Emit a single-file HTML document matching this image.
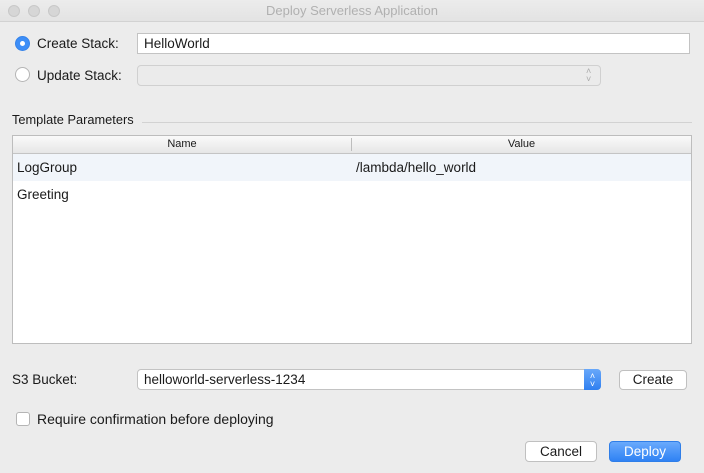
<!DOCTYPE html>
<html><head><style>
*{box-sizing:border-box;margin:0;padding:0}
body{width:704px;height:473px;background:#ececec;font-family:"Liberation Sans",sans-serif;font-size:13.5px;color:#1a1a1a;position:relative;overflow:hidden}
.a{position:absolute}
.tb{left:0;top:0;width:704px;height:22px;background:linear-gradient(#ececec,#e3e3e3);border-bottom:1px solid #d2d2d2;text-align:center;line-height:22px;color:#b0b0b0;font-size:13px}
.dot{width:12px;height:12px;border-radius:50%;background:#d6d6d6;border:1px solid #c8c8c8;top:5px}
.lbl{line-height:16px}
.field{background:#fff;border:1px solid #c3c3c3}
.btn{background:#fff;border:1px solid #c0c0c0;border-radius:4px;text-align:center;line-height:18px}
</style></head><body>
<div class="a tb">Deploy Serverless Application</div>
<div class="a dot" style="left:8px"></div>
<div class="a dot" style="left:28px"></div>
<div class="a dot" style="left:48px"></div>

<div class="a" style="left:15px;top:36px;width:15px;height:15px;border-radius:50%;background:#3d8ef7;border:1px solid #3583ea"><div class="a" style="left:4px;top:4px;width:5px;height:5px;border-radius:50%;background:#fff"></div></div>
<div class="a lbl" style="left:37px;top:36px">Create Stack:</div>
<div class="a field" style="left:137px;top:33px;width:553px;height:21px;padding-left:6px;line-height:19px">HelloWorld</div>

<div class="a" style="left:15px;top:67px;width:15px;height:15px;border-radius:50%;background:#fff;border:1px solid #b5b5b5"></div>
<div class="a lbl" style="left:37px;top:68px">Update Stack:</div>
<div class="a" style="left:137px;top:65px;width:464px;height:21px;background:#ebebeb;border:1px solid #d0d0d0;border-radius:4px"></div>
<div class="a" style="left:586px;top:67px;color:#aaa;font-size:9px;line-height:8px">&#708;<br>&#709;</div>

<div class="a" style="left:12px;top:112px;font-size:12.8px">Template Parameters</div>
<div class="a" style="left:142px;top:122px;width:550px;height:1px;background:#d2d2d2"></div>

<div class="a" style="left:12px;top:135px;width:680px;height:209px;background:#fff;border:1px solid #bdbdbd"></div>
<div class="a" style="left:13px;top:136px;width:678px;height:18px;background:linear-gradient(#fafafa,#e6e6e6);border-bottom:1px solid #c4c4c4;font-size:11px;line-height:17px">
<div class="a" style="left:0;width:338px;text-align:center">Name</div>
<div class="a" style="left:338px;top:2px;width:1px;height:13px;background:#bdbdbd"></div>
<div class="a" style="left:339px;width:339px;text-align:center">Value</div></div>
<div class="a" style="left:13px;top:154px;width:678px;height:27px;background:#f1f5fa"></div>
<div class="a lbl" style="left:17px;top:160px">LogGroup</div>
<div class="a lbl" style="left:356px;top:160px">/lambda/hello_world</div>
<div class="a lbl" style="left:17px;top:187px">Greeting</div>

<div class="a lbl" style="left:12px;top:372px">S3 Bucket:</div>
<div class="a field" style="left:137px;top:369px;width:464px;height:21px;border-radius:4px;padding-left:6px;line-height:19px">helloworld-serverless-1234</div>
<div class="a" style="left:584px;top:369px;width:17px;height:21px;background:linear-gradient(#68a8fa,#2f7ff0);border-radius:0 4px 4px 0;color:#fff;font-size:9px;line-height:8px;text-align:center;padding-top:3px">&#708;<br>&#709;</div>
<div class="a btn" style="left:619px;top:370px;width:68px;height:20px">Create</div>

<div class="a" style="left:16px;top:412px;width:14px;height:14px;background:#fff;border:1px solid #b5b5b5;border-radius:3px"></div>
<div class="a lbl" style="left:37px;top:411px;font-size:14px;line-height:17px">Require confirmation before deploying</div>

<div class="a btn" style="left:525px;top:441px;width:72px;height:21px;line-height:19px">Cancel</div>
<div class="a btn" style="left:609px;top:441px;width:72px;height:21px;line-height:19px;background:linear-gradient(#6aaafc,#2f82f4);border-color:#2f7ee8;color:#fff">Deploy</div>
</body></html>
